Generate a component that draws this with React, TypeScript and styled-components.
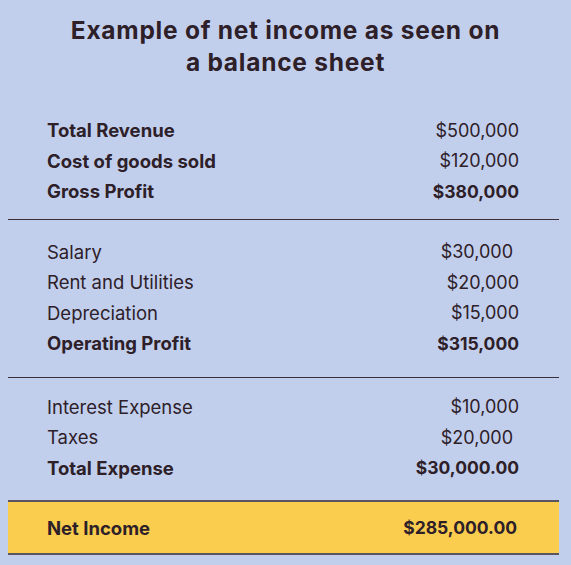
import React from 'react';
import styled, { createGlobalStyle } from 'styled-components';

const GlobalStyle = createGlobalStyle`
  html, body {
    margin: 0;
    padding: 0;
    background-color: #c2cfec;
  }
  body {
    font-family: 'Inter', 'Noto Sans', sans-serif;
    color: #2d2029;
  }
`;

const Page = styled.div`
  width: 571px;
  min-height: 565px;
  padding: 14px 12px 10px 8px;
  box-sizing: border-box;
  background-color: #c2cfec;
`;

const Title = styled.h1`
  margin: 0 0 37px;
  padding: 0 0 0 4px;
  font-size: 24.5px;
  letter-spacing: 0.75px;
  line-height: 32px;
  font-weight: 700;
  text-align: center;
  color: #2d2029;
`;

const Section = styled.div<{ $top: number; $bottom: number }>`
  padding: ${(p) => p.$top}px 0 ${(p) => p.$bottom}px;
`;

const Divider = styled.hr`
  margin: 0;
  border: none;
  border-top: 1.5px solid #3a2e38;
`;

const Row = styled.div`
  display: flex;
  align-items: center;
  justify-content: space-between;
  height: 30.5px;
  padding: 0 40px 0 39px;
`;

const Label = styled.span<{ $bold?: boolean }>`
  font-size: 18.5px;
  font-weight: ${(p) => (p.$bold ? 700 : 400)};
`;

const Value = styled.span<{ $bold?: boolean; $nudge?: number }>`
  font-size: ${(p) => (p.$bold ? 17.5 : 18)}px;
  font-weight: ${(p) => (p.$bold ? 700 : 400)};
  margin-right: ${(p) => p.$nudge ?? 0}px;
`;

const Highlight = styled.div`
  display: flex;
  align-items: center;
  justify-content: space-between;
  height: 51px;
  padding: 0 42px 0 39px;
  background-color: #fbcd4e;
  border-top: 2px solid #5b5461;
  border-bottom: 2px solid #5b5461;
  font-weight: 700;
`;

type Line = {
  label: string;
  value: string;
  boldLabel?: boolean;
  boldValue?: boolean;
  nudge?: number;
};

const sections: { top: number; bottom: number; rows: Line[] }[] = [
  {
    top: 0,
    bottom: 12,
    rows: [
      { label: 'Total Revenue', value: '$500,000', boldLabel: true },
      { label: 'Cost of goods sold', value: '$120,000', boldLabel: true },
      { label: 'Gross Profit', value: '$380,000', boldLabel: true, boldValue: true },
    ],
  },
  {
    top: 17,
    bottom: 18,
    rows: [
      { label: 'Salary', value: '$30,000', nudge: 6 },
      { label: 'Rent and Utilities', value: '$20,000' },
      { label: 'Depreciation', value: '$15,000' },
      { label: 'Operating Profit', value: '$315,000', boldLabel: true, boldValue: true },
    ],
  },
  {
    top: 14,
    bottom: 17,
    rows: [
      { label: 'Interest Expense', value: '$10,000' },
      { label: 'Taxes', value: '$20,000', nudge: 6 },
      { label: 'Total Expense', value: '$30,000.00', boldLabel: true, boldValue: true },
    ],
  },
];

export default function App() {
  return (
    <>
      <GlobalStyle />
      <Page>
        <Title>
          Example of net income as seen on
          <br />a balance sheet
        </Title>
        {sections.map((section, i) => (
          <React.Fragment key={i}>
            {i > 0 && <Divider />}
            <Section $top={section.top} $bottom={section.bottom}>
              {section.rows.map((row) => (
                <Row key={row.label}>
                  <Label $bold={row.boldLabel}>{row.label}</Label>
                  <Value $bold={row.boldValue} $nudge={row.nudge}>
                    {row.value}
                  </Value>
                </Row>
              ))}
            </Section>
          </React.Fragment>
        ))}
        <Highlight>
          <Label $bold>Net Income</Label>
          <Value $bold>$285,000.00</Value>
        </Highlight>
      </Page>
    </>
  );
}
